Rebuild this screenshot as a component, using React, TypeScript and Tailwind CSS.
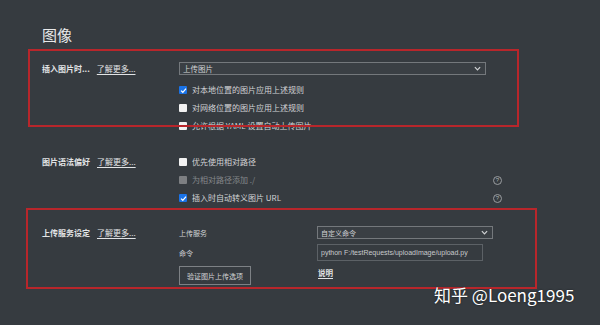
import React from "react";

const cjk = { fontFamily: '"Noto Sans CJK SC", "Noto Sans", sans-serif' };

function Box({ state }: { state: "on" | "off" | "disabled" }) {
  if (state === "on") {
    return (
      <span className="w-[8px] h-[8px] rounded-[1px] bg-[#1a73e8] flex items-center justify-center shrink-0">
        <svg width="7" height="7" viewBox="0 0 10 10">
          <path d="M1.5 5.2 L4 7.6 L8.6 2.4" stroke="#fff" strokeWidth="1.8" fill="none" />
        </svg>
      </span>
    );
  }
  return (
    <span
      className={
        "w-[8px] h-[8px] rounded-[1px] shrink-0 " +
        (state === "off" ? "bg-[#f2f2f2]" : "bg-[#7d7f82]")
      }
    />
  );
}

function Check({ state, children, help }: { state: "on" | "off" | "disabled"; children: React.ReactNode; help?: boolean }) {
  return (
    <div className="h-[18px] flex items-center justify-between">
      <div className="flex items-center gap-[5px]">
        <Box state={state} />
        <span className={state === "disabled" ? "text-[#85888b]" : "text-[#d2d4d6]"}>{children}</span>
      </div>
      {help && (
        <span className="w-[9px] h-[9px] rounded-full border border-[#9a9da0] text-[6px] leading-none text-[#b0b3b6] flex items-center justify-center" style={{ fontFamily: '"Liberation Sans", sans-serif' }}>
          ?
        </span>
      )}
    </div>
  );
}

function Chevron() {
  return (
    <svg width="7" height="5" viewBox="0 0 8 5">
      <path d="M1 1 L4 4 L7 1" stroke="#cfd1d3" strokeWidth="1.4" fill="none" />
    </svg>
  );
}

function Label({ text }: { text: string }) {
  return (
    <div className="w-[137px] shrink-0 flex items-center gap-[7px] text-[#e2e4e6] text-[8px]">
      <span className="font-bold">{text}</span>
      <span className="underline underline-offset-[2px]">了解更多...</span>
    </div>
  );
}

export default function App() {
  return (
    <div className="w-[600px] h-[325px] bg-[#363b40] relative overflow-hidden text-[8px] leading-[12px]" style={cjk}>
      <div className="pl-[42px] pt-[26px]">
        <h1 className="text-[15px] leading-[18px] text-[#e8e9ea]">图像</h1>

        {/* section 1 */}
        <div className="mt-[18px]">
          <div className="flex h-[13px]">
            <Label text="插入图片时..." />
            <div className="w-[307px] h-[13px] border border-[#74787c] bg-[#3a3f44] flex items-center justify-between pl-[3px] pr-[4px] text-[#d2d4d6] text-[7.5px]">
              <span>上传图片</span>
              <Chevron />
            </div>
          </div>
          <div className="ml-[137px] mt-[6px] w-[307px]">
            <Check state="on">对本地位置的图片应用上述规则</Check>
            <Check state="off">对网络位置的图片应用上述规则</Check>
            <Check state="off">允许根据 YAML 设置自动上传图片</Check>
          </div>
        </div>

        {/* section 2 */}
        <div className="mt-[18px] flex">
          <div className="h-[18px] flex items-center">
            <Label text="图片语法偏好" />
          </div>
          <div className="w-[323px]">
            <Check state="off">优先使用相对路径</Check>
            <Check state="disabled" help>为相对路径添加 ./</Check>
            <Check state="on" help>插入时自动转义图片 URL</Check>
          </div>
        </div>

        {/* section 3 */}
        <div className="mt-[19px] flex">
          <div className="h-[13px] flex items-center">
            <Label text="上传服务设定" />
          </div>
          <div className="flex flex-col text-[#d2d4d6] text-[7px]">
            <div className="flex h-[13px] items-center">
              <span className="w-[138px]">上传服务</span>
              <div className="w-[176px] h-[13px] border border-[#74787c] bg-[#3a3f44] flex items-center justify-between pl-[3px] pr-[4px]">
                <span>自定义命令</span>
                <Chevron />
              </div>
            </div>
            <div className="flex h-[17px] items-center mt-[5px]">
              <span className="w-[138px]">命令</span>
              <div className="w-[166px] h-[17px] border border-[#5c6166] bg-[#363b40] flex items-center pl-[3px] text-[7px] text-[#c8cacc] whitespace-nowrap overflow-hidden" style={{ fontFamily: '"Liberation Sans", sans-serif' }}>
                python F:/testRequests/uploadImage/upload.py
              </div>
            </div>
            <div className="flex mt-[5px]">
              <div className="w-[138px]">
                <div className="w-[72px] h-[19px] border border-[#7d8185] flex items-center justify-center text-[#d2d4d6] whitespace-nowrap">
                  验证图片上传选项
                </div>
              </div>
              <span className="underline underline-offset-[2px] font-bold text-[#e2e4e6] mt-[1px] ml-[1px] text-[7.5px]">说明</span>
            </div>
          </div>
        </div>
      </div>

      {/* annotation boxes */}
      <div className="absolute left-[28px] top-[49px] w-[491px] h-[78px] border-2 border-[#b8262b]" />
      <div className="absolute left-[26px] top-[208px] w-[511px] h-[81px] border-2 border-[#b8262b]" />

      {/* watermark */}
      <div
        className="absolute left-[434px] top-[284px] text-[17px] leading-[22px] text-white whitespace-nowrap"
        style={{ textShadow: "0 0 2px rgba(0,0,0,0.6)" }}
      >
        知乎 @Loeng1995
      </div>
    </div>
  );
}
